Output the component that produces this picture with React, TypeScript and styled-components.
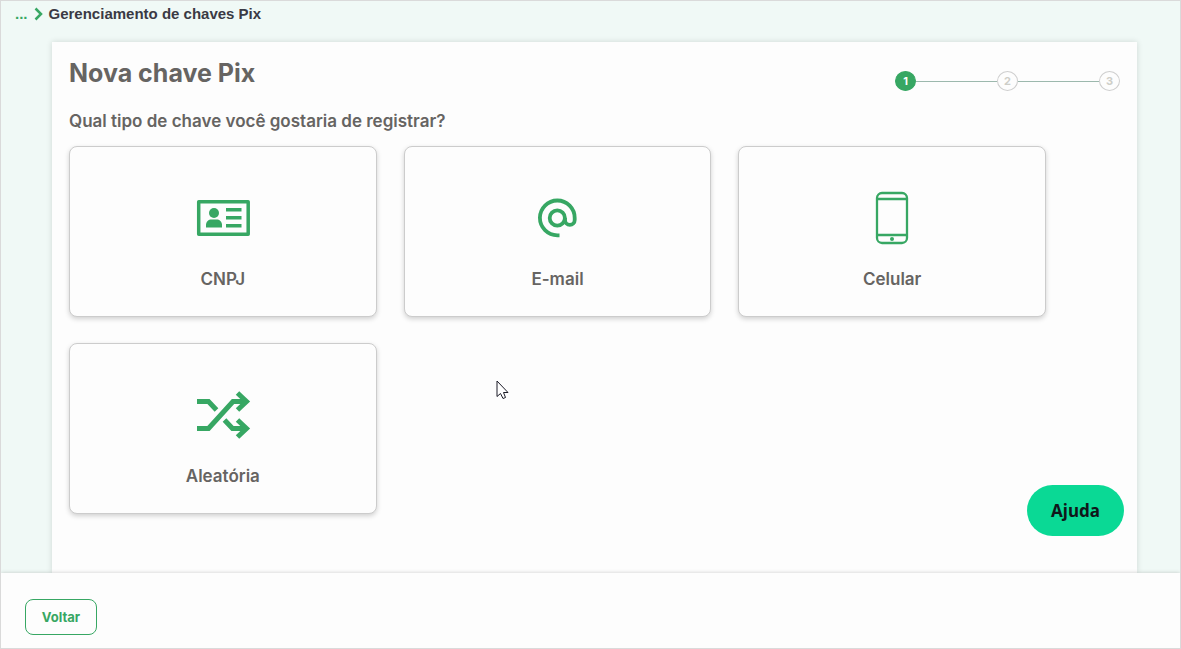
import React from "react";
import styled, { createGlobalStyle } from "styled-components";

const green = "#37a763";
const grey = "#666462";

const GlobalStyle = createGlobalStyle`
  *, *::before, *::after { box-sizing: border-box; }
  body {
    margin: 0;
    background: #f0f9f6;
    color: ${grey};
    font-family: Inter, "Open Sans", sans-serif;
  }
  button { font-family: inherit; cursor: pointer; }
`;

const Page = styled.div`
  position: relative;
  display: flex;
  flex-direction: column;
  min-height: 100vh;
  border: 1px solid #dadada;
  overflow: hidden;
`;

const Breadcrumb = styled.nav`
  display: flex;
  align-items: center;
  height: 26px;
  padding: 0 14px;
  font: 700 15px/20px "Liberation Sans", Arial, sans-serif;
  color: #3a3a44;
`;

const MoreLink = styled.a`
  color: ${green};
  text-decoration: none;
`;

const Chevron = styled.svg`
  width: 9px;
  height: 14px;
  margin: 0 6px;
`;

const Panel = styled.main`
  flex: 1;
  margin: 15px 43px 0 51px;
  padding: 15px 17px 58px;
  background: #fdfdfd;
  box-shadow: 0 0 6px rgba(0, 0, 0, 0.14);
`;

const PanelHeader = styled.header`
  display: flex;
  justify-content: space-between;
  align-items: flex-start;
  height: 52px;
`;

const Title = styled.h1`
  margin: 0;
  font-size: 25px;
  line-height: 32px;
  font-weight: 700;
`;

const Question = styled.h2`
  margin: 0 0 13px;
  font-size: 17px;
  line-height: 24px;
  font-weight: 600;
`;

const Steps = styled.ol`
  display: flex;
  align-items: center;
  width: 225px;
  margin: 14px 0 0;
  padding: 0;
  list-style: none;
`;

const Step = styled.li<{ $active?: boolean }>`
  display: flex;
  align-items: center;
  justify-content: center;
  width: 21px;
  height: 20px;
  border: 1px solid ${(p) => (p.$active ? green : "#cecece")};
  border-radius: 50%;
  background: ${(p) => (p.$active ? green : "#fdfdfd")};
  color: ${(p) => (p.$active ? "#ffffff" : "#cecec8")};
  font-size: 11px;
  line-height: 16px;
  font-weight: 700;
`;

const StepLine = styled.li`
  flex: 1;
  height: 1px;
  background: #9cb8ad;
`;

const Options = styled.div`
  display: grid;
  grid-template-columns: repeat(3, 1fr);
  gap: 26px 27px;
  max-width: 977px;
`;

const OptionCard = styled.button`
  display: flex;
  flex-direction: column;
  align-items: center;
  height: 171px;
  padding: 42px 16px 0;
  border: 1px solid #cccccc;
  border-radius: 8px;
  background: #fdfdfd;
  box-shadow: 0 2px 5px rgba(0, 0, 0, 0.18);
  color: ${grey};
  font-size: 17px;
  line-height: 24px;
  font-weight: 600;
`;

const OptionIcon = styled.svg`
  width: 56px;
  height: 58px;
  margin-bottom: 20px;
  fill: none;
  stroke: ${green};
`;

const Footer = styled.footer`
  position: relative;
  padding: 26px 24px 13px;
  background: #fdfdfd;
  box-shadow: 0 0 4px rgba(0, 0, 0, 0.2);
`;

const BackButton = styled.button`
  display: block;
  width: 72px;
  height: 36px;
  padding: 0;
  border: 1px solid ${green};
  border-radius: 8px;
  background: #fdfdfd;
  color: ${green};
  font-size: 13px;
  line-height: 20px;
  font-weight: 700;
`;

const HelpButton = styled.button`
  position: fixed;
  right: 57px;
  bottom: 113px;
  width: 97px;
  height: 51px;
  padding: 0;
  border: 0;
  border-radius: 26px;
  background: #0ad995;
  color: #10171a;
  && { font-family: "Noto Sans", "Open Sans", sans-serif; }
  font-size: 17px;
  line-height: 24px;
  font-weight: 700;
`;

const Pointer = styled.svg`
  position: absolute;
  left: 495px;
  top: 379px;
  width: 13px;
  height: 20px;
  pointer-events: none;
`;

const IdCardIcon = () => (
  <OptionIcon viewBox="0 0 56 58" aria-hidden="true">
    <rect x="3.700" y="12.7" width="49.500" height="32.5" strokeWidth="3.5" strokeLinejoin="round" />
    <g fill={green} stroke="none">
      <circle cx="19" cy="24" r="5" />
      <path d="M11 38.500v-2.500c0-3.500 2.500-5.500 5.500-5.500h5c3 0 5.500 2 5.500 5.500v2.500z" />
      <path d="M31 19h15.500v3.500H31zM31 27h15.500v3.500H31zM31 35h15.500v3.500H31z" />
    </g>
  </OptionIcon>
);

const AtIcon = () => (
  <OptionIcon viewBox="0 0 56 58" aria-hidden="true" strokeWidth="3.8">
    <circle cx="28.300" cy="29" r="7.600" />
    <path d="M30.500 46.300H28.300A17.400 17.400 0 1 1 45.700 29V31A4.800 4.800 0 0 1 36 31V29" />
  </OptionIcon>
);

const PhoneIcon = () => (
  <OptionIcon viewBox="0 0 56 58" aria-hidden="true" strokeWidth="2.300">
    <rect x="13" y="4" width="30" height="50" rx="5" />
    <path d="M13 10H43M13 46H43" />
    <circle cx="28" cy="50" r="2" fill={green} stroke="none" />
  </OptionIcon>
);

const ShuffleIcon = () => (
  <OptionIcon viewBox="0 0 56 58" aria-hidden="true" strokeWidth="5">
    <path d="M2 42.500H13.500L38 15.500H51.500M2 15.500H13.500L21.500 24M29.500 34L37.500 42.500H51.500" />
    <path d="M42.500 7L51.500 15.500L42.500 24M42.500 34L51.500 42.500L42.500 51" />
  </OptionIcon>
);

const options = [
  { label: "CNPJ", Icon: IdCardIcon },
  { label: "E-mail", Icon: AtIcon },
  { label: "Celular", Icon: PhoneIcon },
  { label: "Aleatória", Icon: ShuffleIcon },
];

export default function App() {
  return (
    <>
      <GlobalStyle />
      <Page>
        <Breadcrumb>
          <MoreLink href="#">...</MoreLink>
          <Chevron viewBox="0 0 9 14" aria-hidden="true">
            <path d="M1.500 1.500L7 7L1.500 12.500" fill="none" stroke={green} strokeWidth="2.500" />
          </Chevron>
          <span>Gerenciamento de chaves Pix</span>
        </Breadcrumb>
        <Panel>
          <PanelHeader>
            <Title>Nova chave Pix</Title>
            <Steps>
              <Step $active aria-current="step">1</Step>
              <StepLine role="presentation" />
              <Step>2</Step>
              <StepLine role="presentation" />
              <Step>3</Step>
            </Steps>
          </PanelHeader>
          <Question>Qual tipo de chave você gostaria de registrar?</Question>
          <Options>
            {options.map(({ label, Icon }) => (
              <OptionCard key={label} type="button">
                <Icon />
                {label}
              </OptionCard>
            ))}
          </Options>
        </Panel>
        <Footer>
          <BackButton type="button">Voltar</BackButton>
        </Footer>
        <Pointer viewBox="0 0 13 20" aria-hidden="true">
          <path
            d="M1 1V16.500L4.500 13.500L7 18.500L9.500 17.500L7.500 12.500H12Z"
            fill="#ffffff"
            stroke="#1c1c28"
            strokeWidth="1"
          />
        </Pointer>
      </Page>
      <HelpButton type="button">Ajuda</HelpButton>
    </>
  );
}
